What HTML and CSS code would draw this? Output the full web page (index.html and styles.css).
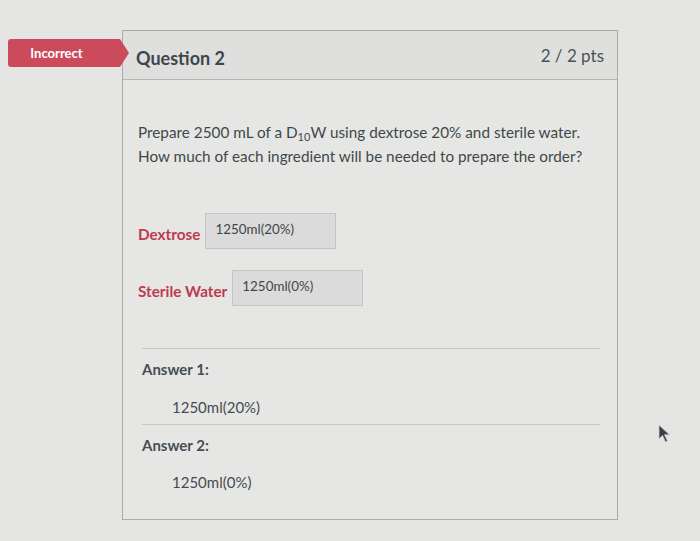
FILE: index.html
```html
<!DOCTYPE html>
<html>
<head>
<meta charset="utf-8">
<link rel="stylesheet" href="styles.css">
</head>
<body>
<div class="page">
  <div class="card">
    <div class="badge"><span>Incorrect</span></div>
    <div class="header">
      <div class="title">Question 2</div>
      <div class="pts">2 / 2 pts</div>
    </div>
    <div class="body">
      <p class="text">Prepare 2500 mL of a D<sub>10</sub>W using dextrose 20% and sterile water.<br>How much of each ingredient will be needed to prepare the order?</p>
      <div class="field f1">
        <span class="label">Dextrose</span>
        <span class="box">1250ml(20%)</span>
      </div>
      <div class="field f2">
        <span class="label">Sterile Water</span>
        <span class="box">1250ml(0%)</span>
      </div>
      <div class="answers">
        <div class="answer">
          <div class="aname">Answer 1:</div>
          <div class="aval">1250ml(20%)</div>
        </div>
        <div class="answer">
          <div class="aname">Answer 2:</div>
          <div class="aval">1250ml(0%)</div>
        </div>
      </div>
    </div>
  </div>
</div>
<svg class="cursor" width="14" height="20" viewBox="0 0 14 20"><path d="M1 1 L1 15 L4.5 11.5 L7.5 18 L9.5 17 L6.5 10.8 L11.5 10.8 Z" fill="#3a4049" stroke="#c9ccd0" stroke-width="0.8"/></svg>
</body>
</html>
```
FILE: styles.css
```css
html, body {
  margin: 0;
  padding: 0;
}
body {
  background: #e5e6e4;
  font-family: Lato, "Open Sans", sans-serif;
  color: #3c4649;
  width: 700px;
  height: 541px;
  overflow: hidden;
  position: relative;
}
.page {
  padding: 30px 0 0 122px;
}
.card {
  position: relative;
  width: 494px;
  height: 488px;
  border: 1px solid #a9abab;
  background: #e6e7e5;
}
.badge {
  position: absolute;
  left: -115px;
  top: 8px;
  width: 112px;
  height: 28px;
  background: #cb4b5d;
  border-radius: 3px 0 0 3px;
  display: flex;
  align-items: center;
  justify-content: center;
  color: #fff;
  font-weight: 700;
  font-size: 13px;
}
.badge::after {
  content: "";
  position: absolute;
  right: -9px;
  top: 0;
  border-top: 14px solid transparent;
  border-bottom: 14px solid transparent;
  border-left: 9px solid #cb4b5d;
}
.badge span {
  margin-right: 15px;
}
.header {
  height: 48px;
  background: #dfe0de;
  border-bottom: 1px solid #b6b8b7;
  display: flex;
  align-items: center;
  justify-content: space-between;
  padding: 0 13px 0 13px;
}
.title {
  font-size: 18px;
  font-weight: 700;
  color: #3d474b;
  padding-top: 6px;
}
.pts {
  font-size: 17px;
  font-weight: 400;
  color: #4a5356;
  padding-top: 0;
}
.body {
  padding: 40px 0 0 15px;
}
.text {
  margin: 0;
  font-size: 15.3px;
  line-height: 24px;
  color: #3f474a;
}
.text sub {
  font-size: 11px;
  line-height: 0;
  vertical-align: -3px;
}
.field {
  display: flex;
  align-items: center;
  gap: 5px;
}
.f1 { margin-top: 45px; }
.f2 { margin-top: 21px; }
.label {
  color: #bf3a50;
  font-weight: 700;
  font-size: 15.3px;
  padding-top: 6px;
}
.box {
  box-sizing: border-box;
  height: 36px;
  width: 131px;
  background: #dadbda;
  border: 1px solid #c4c5c4;
  font-size: 13.4px;
  color: #3f474a;
  padding: 7px 0 0 9px;
}
.answers {
  margin: 42px 17px 0 4px;
}
.answer {
  border-top: 1px solid #c7c9c8;
  padding: 9px 0 6px 0;
}
.answer + .answer {
  padding-top: 9px;
}
.aname {
  font-size: 15px;
  font-weight: 700;
  color: #464e51;
  line-height: 22px;
}
.aval {
  font-size: 15px;
  color: #454c4f;
  line-height: 22px;
  padding: 16px 0 0 30px;
}
.answer + .answer .aval {
  padding-top: 15px;
}
.cursor {
  position: absolute;
  left: 658px;
  top: 424px;
}
```
